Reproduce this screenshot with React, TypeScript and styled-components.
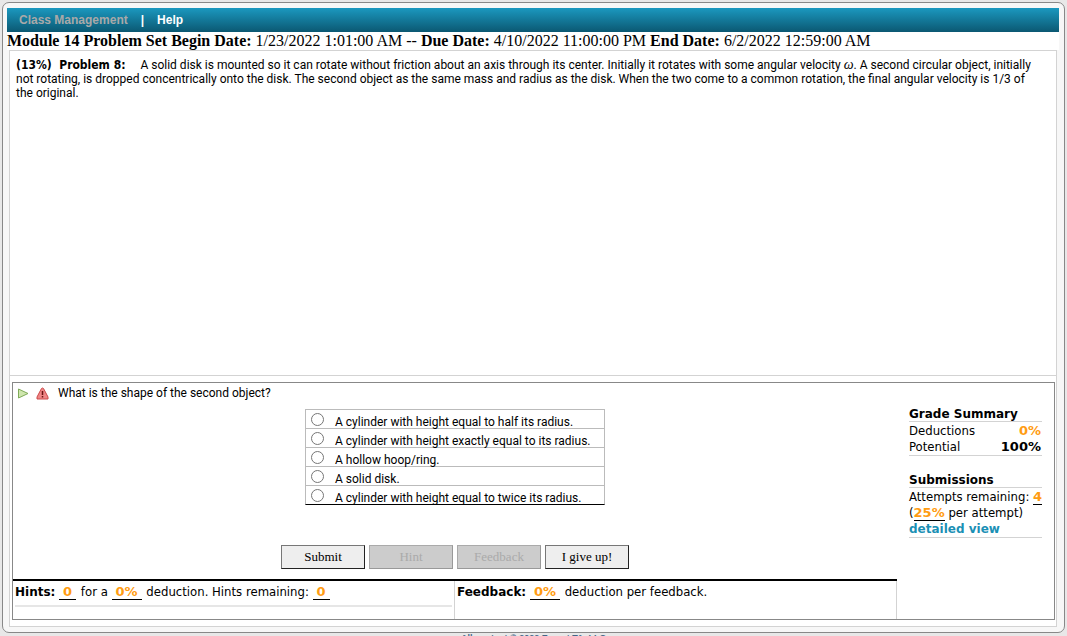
import React from "react";
import styled, { createGlobalStyle } from "styled-components";

const body = `Roboto, Tahoma, sans-serif`;
const sans = `"DejaVu Sans Condensed", Tahoma, "DejaVu Sans", sans-serif`;
const wide = `"DejaVu Sans", Verdana, sans-serif`;
const serif = `"Liberation Serif", "Times New Roman", serif`;
const arial = `"Liberation Sans", Arial, sans-serif`;

const GlobalStyle = createGlobalStyle`
  *, *::before, *::after { box-sizing: border-box; }
  body {
    margin: 0;
    height: 100vh;
    overflow: hidden;
    background: #e8e8e8;
    color: #000;
    font: 12px/14px ${body};
  }
`;

const Frame = styled.div`
  margin: 2px 2px 0;
  padding: 5px 5px 5px 4px;
  background: #f7f7f7;
  border: 1px solid #888;
  border-radius: 7px;
`;

const NavBar = styled.nav`
  display: flex;
  align-items: center;
  gap: 13px;
  height: 24px;
  padding: 0 12px;
  background: linear-gradient(#1b98bf, #0b5872);
  color: #fff;
  font: bold 12px/16px ${arial};
`;

const NavLink = styled.a<{ $muted?: boolean }>`
  color: ${(p) => (p.$muted ? "#a9a9a9" : "#fff")};
  text-decoration: none;
`;

const Dates = styled.div`
  height: 18px;
  background: #fff;
  font: 16px/18px ${serif};
`;

const Content = styled.main`
  margin: 0 2px;
  background: #fff;
  border: 1px solid #d3d3d3;
`;

const Problem = styled.section`
  min-height: 325px;
  padding: 7px 14px 7px 6px;
  border-bottom: 1px solid #d3d3d3;
`;

const ProblemTitle = styled.b`
  margin-right: 12px;
  font-family: ${sans};
  white-space: pre;
`;

const Omega = styled.i`
  font: italic 14px/12px ${serif};
`;

const Part = styled.section`
  display: flex;
  margin: 6px 1px 6px 2px;
  border: 1px solid #888;
`;

const PartMain = styled.div`
  display: flex;
  flex-direction: column;
  flex: 1;
`;

const Question = styled.div`
  display: flex;
  align-items: center;
  height: 20px;
  padding-left: 4px;

  svg + svg {
    margin: 0 9px 0 6px;
  }
`;

const Choices = styled.ul`
  align-self: center;
  width: 300px;
  margin: 6px 0 0;
  padding: 0;
  list-style: none;
  border: 1px solid #bbb;
  border-bottom-color: #000;
`;

const Choice = styled.li`
  height: 18px;

  & + & {
    height: 19px;
    border-top: 1px solid #bbb;
  }
`;

const ChoiceLabel = styled.label`
  display: flex;
  gap: 11px;
  line-height: 24px;
`;

const Radio = styled.input`
  flex: none;
  width: 13px;
  height: 13px;
  margin: 3px 0 0 5px;
`;

const Actions = styled.div`
  display: flex;
  justify-content: center;
  gap: 4px;
  margin: 40px 0 10px;
`;

const Action = styled.button`
  width: 84px;
  height: 24px;
  padding: 0;
  border: 1px solid #222;
  border-top-color: #777;
  border-left-color: #777;
  background: #eee;
  color: #000;
  font: 13px/16px ${serif};

  &:disabled {
    border-color: #aaa #999 #999 #aaa;
    background: #ccc;
    color: #aaa;
  }
`;

const Aids = styled.div`
  display: grid;
  grid-template-columns: 1fr 1fr;
  height: 40px;
  border-top: 2px solid #000;
`;

const Aid = styled.div`
  padding: 3px 2px 0;
  border-right: 1px solid #d3d3d3;
  font: 13px/16px ${sans};
`;

const AidLine = styled.div`
  height: 16px;
  white-space: nowrap;
`;

const AidTitle = styled.b`
  font: bold 12px/16px ${wide};
`;

const Rule = styled.div`
  margin-top: 5px;
  border-top: 2px solid #e6e6e6;
`;

const Value = styled.b<{ $padded?: boolean }>`
  display: inline-block;
  margin-right: ${(p) => (p.$padded ? 1 : 0)}px;
  padding: 0 ${(p) => (p.$padded ? 4 : 0)}px;
  border-bottom: 1px solid #000;
  color: #ff9c12;
  font: bold 13px/15px ${wide};
`;

const Summary = styled.aside`
  width: 145px;
  flex: none;
  margin-left: 12px;
  padding: 24px 0 0;
  font: 13px/16px ${sans};
`;

const SummaryBlock = styled.div`
  width: 133px;
  margin-bottom: 17px;
  border-bottom: 1px solid #d3d3d3;
`;

const SummaryTitle = styled.h2`
  height: 15px;
  margin: 0 0 1px;
  border-bottom: 1px solid #d3d3d3;
  font: bold 12px/14px ${wide};
`;

const SummaryRow = styled.div`
  display: flex;
  justify-content: space-between;
  height: 16px;
  white-space: nowrap;
`;

const Percent = styled.b<{ $warm?: boolean }>`
  padding-right: 1px;
  color: ${(p) => (p.$warm ? "#ff9c12" : "#000")};
  font: bold 13px/16px ${wide};
`;

const DetailLink = styled.a`
  display: block;
  color: #1b90b5;
  font: bold 12px/16px ${wide};
  text-decoration: none;
`;

const Footer = styled.footer`
  color: #446688;
  font: bold 9px/10px ${arial};
  text-align: center;
`;

const PlayIcon = () => (
  <svg width="13" height="13" viewBox="0 0 13 13" aria-hidden="true">
    <path d="M1.5 2v9L11 6.5z" fill="#cfe6ae" stroke="#7fab58" strokeLinejoin="round" />
  </svg>
);

const WarningIcon = () => (
  <svg width="13" height="13" viewBox="0 0 13 13" aria-hidden="true">
    <path d="M6.5 1 5.5 1.5 1 10v2h11v-2L7.500 1.500z" fill="#ee8585" stroke="#cc4a4a" strokeLinejoin="round" />
    <path d="M6.5 4v4M6.5 9v1.5" stroke="#6b1111" strokeWidth="1.5" />
  </svg>
);

const choices = [
  "A cylinder with height equal to half its radius.",
  "A cylinder with height exactly equal to its radius.",
  "A hollow hoop/ring.",
  "A solid disk.",
  "A cylinder with height equal to twice its radius.",
];

export default function App() {
  return (
    <>
      <GlobalStyle />
      <Frame>
        <NavBar>
          <NavLink href="#class" $muted>Class Management</NavLink>
          <span>|</span>
          <NavLink href="#help">Help</NavLink>
        </NavBar>
        <Dates>
          <b>Module 14 Problem Set Begin Date:</b> 1/23/2022 1:01:00 AM -- <b>Due Date:</b> 4/10/2022
          11:00:00 PM <b>End Date:</b> 6/2/2022 12:59:00 AM
        </Dates>
        <Content>
          <Problem>
            <ProblemTitle>{"(13%)  Problem 8:"}</ProblemTitle> A solid disk is mounted so it can rotate
            without friction about an axis through its center. Initially it rotates with some angular
            velocity <Omega>ω</Omega>. A second circular object, initially not rotating, is dropped
            concentrically onto the disk. The second object as the same mass and radius as the disk.
            When the two come to a common rotation, the final angular velocity is 1/3 of the original.
          </Problem>
          <Part>
            <PartMain>
              <Question>
                <PlayIcon />
                <WarningIcon />
                What is the shape of the second object?
              </Question>
              <Choices>
                {choices.map((text) => (
                  <Choice key={text}>
                    <ChoiceLabel>
                      <Radio type="radio" name="shape" />
                      {text}
                    </ChoiceLabel>
                  </Choice>
                ))}
              </Choices>
              <Actions>
                <Action type="button">Submit</Action>
                <Action type="button" disabled>Hint</Action>
                <Action type="button" disabled>Feedback</Action>
                <Action type="button">I give up!</Action>
              </Actions>
              <Aids>
                <Aid>
                  <AidLine>
                    <AidTitle>Hints:</AidTitle> <Value $padded>0</Value> for a{" "}
                    <Value $padded>0%</Value> deduction. Hints remaining: <Value $padded>0</Value>
                  </AidLine>
                  <Rule />
                </Aid>
                <Aid>
                  <AidLine>
                    <AidTitle>Feedback:</AidTitle> <Value $padded>0%</Value> deduction per feedback.
                  </AidLine>
                </Aid>
              </Aids>
            </PartMain>
            <Summary>
              <SummaryBlock>
                <SummaryTitle>Grade Summary</SummaryTitle>
                <SummaryRow>
                  Deductions <Percent $warm>0%</Percent>
                </SummaryRow>
                <SummaryRow>
                  Potential <Percent>100%</Percent>
                </SummaryRow>
              </SummaryBlock>
              <SummaryBlock>
                <SummaryTitle>Submissions</SummaryTitle>
                <SummaryRow>
                  Attempts remaining: <Value>4</Value>
                </SummaryRow>
                <div>
                  (<Value>25%</Value> per attempt)
                </div>
                <DetailLink href="#details">detailed view</DetailLink>
              </SummaryBlock>
            </Summary>
          </Part>
        </Content>
      </Frame>
      <Footer>All content © 2022 Expert TA, LLC</Footer>
    </>
  );
}
